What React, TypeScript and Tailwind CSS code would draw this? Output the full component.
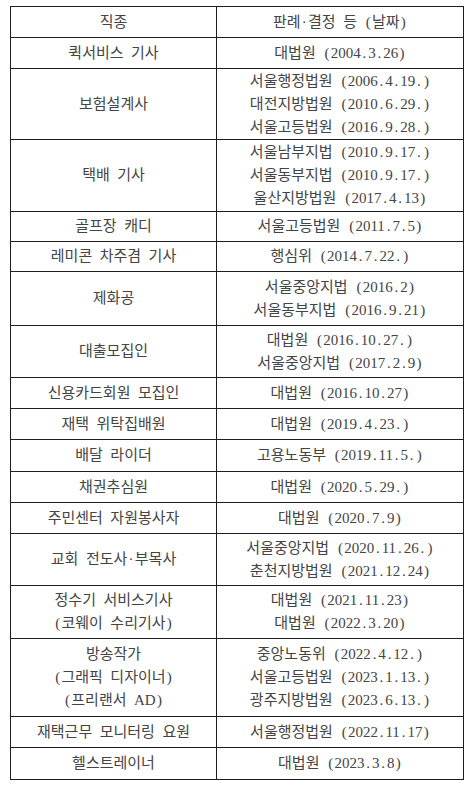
import React from "react";

type Row = { left: string[]; right: string[]; h: string };

const rows: Row[] = [
  { left: ["퀵서비스 기사"], right: ["대법원 (2004.3.26)"], h: "h-[31px]" },
  {
    left: ["보험설계사"],
    right: ["서울행정법원 (2006.4.19.)", "대전지방법원 (2010.6.29.)", "서울고등법원 (2016.9.28.)"],
    h: "h-[71px]",
  },
  {
    left: ["택배 기사"],
    right: ["서울남부지법 (2010.9.17.)", "서울동부지법 (2010.9.17.)", "울산지방법원 (2017.4.13)"],
    h: "h-[72px]",
  },
  { left: ["골프장 캐디"], right: ["서울고등법원 (2011.7.5)"], h: "h-[30px]" },
  { left: ["레미콘 차주겸 기사"], right: ["행심위 (2014.7.22.)"], h: "h-[30px]" },
  { left: ["제화공"], right: ["서울중앙지법 (2016.2)", "서울동부지법 (2016.9.21)"], h: "h-[54px]" },
  { left: ["대출모집인"], right: ["대법원 (2016.10.27.)", "서울중앙지법 (2017.2.9)"], h: "h-[52px]" },
  { left: ["신용카드회원 모집인"], right: ["대법원 (2016.10.27)"], h: "h-[31px]" },
  { left: ["재택 위탁집배원"], right: ["대법원 (2019.4.23.)"], h: "h-[31px]" },
  { left: ["배달 라이더"], right: ["고용노동부 (2019.11.5.)"], h: "h-[32px]" },
  { left: ["채권추심원"], right: ["대법원 (2020.5.29.)"], h: "h-[31px]" },
  { left: ["주민센터 자원봉사자"], right: ["대법원 (2020.7.9)"], h: "h-[31px]" },
  {
    left: ["교회 전도사·부목사"],
    right: ["서울중앙지법 (2020.11.26.)", "춘천지방법원 (2021.12.24)"],
    h: "h-[52px]",
  },
  {
    left: ["정수기 서비스기사", "(코웨이 수리기사)"],
    right: ["대법원 (2021.11.23)", "대법원 (2022.3.20)"],
    h: "h-[53px]",
  },
  {
    left: ["방송작가", "(그래픽 디자이너)", "(프리랜서 AD)"],
    right: ["중앙노동위 (2022.4.12.)", "서울고등법원 (2023.1.13.)", "광주지방법원 (2023.6.13.)"],
    h: "h-[78px]",
  },
  { left: ["재택근무 모니터링 요원"], right: ["서울행정법원 (2022.11.17)"], h: "h-[31px]" },
  { left: ["헬스트레이너"], right: ["대법원 (2023.3.8)"], h: "h-[31px]" },
];

const isNormal = (c: string) => /[\u1100-\u11FF\u3131-\u318E\uAC00-\uD7A3A-Za-z0-9]/.test(c);

function T({ s }: { s: string }) {
  const out: React.ReactNode[] = [];
  let buf = "";
  Array.from(s).forEach((c, i) => {
    if (isNormal(c)) {
      buf += c;
    } else {
      if (buf) {
        out.push(<span key={"b" + i}>{buf}</span>);
        buf = "";
      }
      out.push(
        <span key={"h" + i} className="inline-block w-[7.5px] text-center">
          {c === " " ? "\u00a0" : c}
        </span>
      );
    }
  });
  if (buf) out.push(<span key="end">{buf}</span>);
  return <div className="whitespace-nowrap">{out}</div>;
}

function Cell({ lines, left }: { lines: string[]; left?: boolean }) {
  return (
    <div
      className={
        "flex flex-col items-center justify-center " + (left ? "border-r border-[#1e1e1e]" : "")
      }
    >
      {lines.map((l, i) => (
        <T key={i} s={l} />
      ))}
    </div>
  );
}

export default function App() {
  return (
    <div
      className="w-[475px] h-[789px] bg-white pt-[6px] pl-[10px] text-[15px] leading-[23px] text-[#444444]"
      style={{ fontFamily: '"Liberation Serif", "Noto Sans CJK KR", serif' }}
    >
      <div className="w-[454px] border border-[#1e1e1e] flex flex-col">
        <div className="grid grid-cols-[206px_1fr] h-[31px] border-b border-[#1e1e1e]">
          <Cell left lines={["직종"]} />
          <Cell lines={["판례·결정 등 (날짜)"]} />
        </div>
        {rows.map((r, i) => (
          <div
            key={i}
            className={
              "grid grid-cols-[206px_1fr] " +
              r.h +
              (i < rows.length - 1 ? " border-b border-[#1e1e1e]" : "")
            }
          >
            <Cell left lines={r.left} />
            <Cell lines={r.right} />
          </div>
        ))}
      </div>
    </div>
  );
}
